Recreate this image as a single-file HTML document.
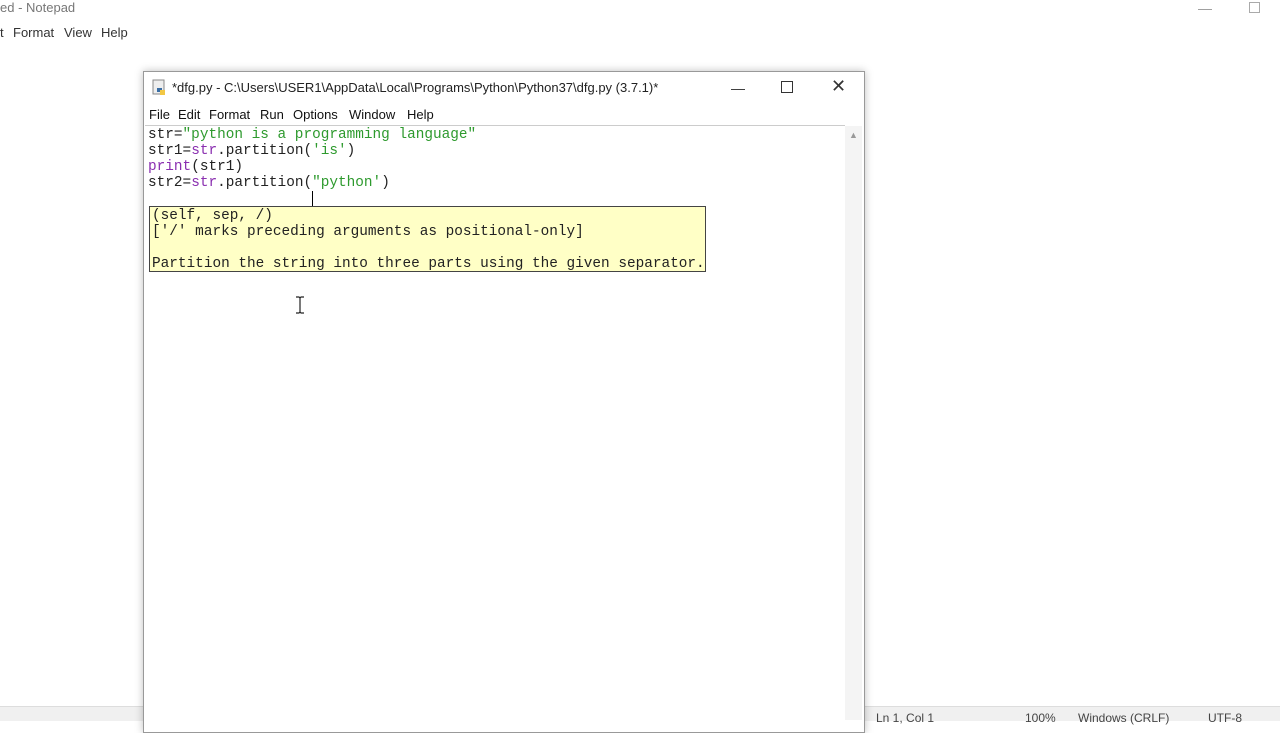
<!DOCTYPE html><html><head><style>
body{margin:0;width:1280px;height:720px;overflow:hidden;background:#fff;font-family:"Liberation Sans",sans-serif;position:relative}
.a{position:absolute}
.mono{font-family:"Liberation Mono",monospace;font-size:14.4px;white-space:pre;line-height:16px;color:#222}
.g{color:#2e9a2e}.p{color:#8a2fb0}
</style></head><body>
<div class="a" style="left:0;top:0;font-size:13px;color:#777">ed - Notepad</div>
<div class="a" style="left:1198px;top:0;color:#999;font-size:14px">—</div>
<div class="a" style="left:1249px;top:2px;width:9px;height:9px;border:1px solid #aaa"></div>
<div class="a" style="left:0;top:25px;font-size:13px;color:#333">t</div>
<div class="a" style="left:13px;top:25px;font-size:13px;color:#333">Format</div>
<div class="a" style="left:64px;top:25px;font-size:13px;color:#333">View</div>
<div class="a" style="left:101px;top:25px;font-size:13px;color:#333">Help</div>
<div class="a" style="left:0;top:706px;width:1280px;height:14px;background:#f0f0f0;border-top:1px solid #ddd"></div>
<div class="a" style="left:876px;top:711px;font-size:12px;color:#444">Ln 1, Col 1</div>
<div class="a" style="left:1025px;top:711px;font-size:12px;color:#444">100%</div>
<div class="a" style="left:1078px;top:711px;font-size:12px;color:#444">Windows (CRLF)</div>
<div class="a" style="left:1208px;top:711px;font-size:12px;color:#444">UTF-8</div>
<div class="a" style="left:143px;top:71px;width:720px;height:660px;background:#fff;border:1px solid #999;box-shadow:0 0 8px rgba(0,0,0,.25)"></div>
<svg class="a" style="left:151px;top:79px" width="18" height="18"><rect x="2" y="1" width="11" height="14" fill="#eee" stroke="#888"/><path d="M6 9h5v4H6z" fill="#3a6ea5"/><path d="M9 11h5v5H9z" fill="#f2c744"/></svg>
<div class="a" style="left:172px;top:80px;font-size:13px;color:#222">*dfg.py - C:\Users\USER1\AppData\Local\Programs\Python\Python37\dfg.py (3.7.1)*</div>
<div class="a" style="left:731px;top:80px;font-size:14px;color:#333">—</div>
<div class="a" style="left:781px;top:81px;width:10px;height:10px;border:1px solid #333"></div>
<div class="a" style="left:831px;top:76px;font-size:18px;color:#333">✕</div>
<div class="a" style="left:149px;top:107px;font-size:13px;color:#111">File</div>
<div class="a" style="left:178px;top:107px;font-size:13px;color:#111">Edit</div>
<div class="a" style="left:209px;top:107px;font-size:13px;color:#111">Format</div>
<div class="a" style="left:260px;top:107px;font-size:13px;color:#111">Run</div>
<div class="a" style="left:293px;top:107px;font-size:13px;color:#111">Options</div>
<div class="a" style="left:349px;top:107px;font-size:13px;color:#111">Window</div>
<div class="a" style="left:407px;top:107px;font-size:13px;color:#111">Help</div>
<div class="a" style="left:145px;top:125px;width:700px;height:1px;background:#ccc"></div>
<div class="a" style="left:845px;top:126px;width:17px;height:594px;background:#f4f4f4"></div>
<div class="a" style="left:849px;top:130px;font-size:9px;color:#999">▲</div>
<div class="a mono" style="left:148px;top:127px">str=<span class="g">"python is a programming language"</span>
str1=<span class="p">str</span>.partition(<span class="g">'is'</span>)
<span class="p">print</span>(str1)
str2=<span class="p">str</span>.partition(<span class="g">"python'</span>)</div>
<div class="a" style="left:312px;top:191px;width:1px;height:16px;background:#000"></div>
<div class="a mono" style="left:149px;top:206px;width:553px;height:63px;background:#ffffc6;border:1px solid #444;padding-left:2px;line-height:16px;padding-top:1px;color:#222">(self, sep, /)
['/' marks preceding arguments as positional-only]

Partition the string into three parts using the given separator.</div>
<svg class="a" style="left:295px;top:296px" width="10" height="18"><path d="M1 1h3l1 1 1-1h3M5 2v14M1 17h3l1-1 1 1h3" stroke="#222" fill="none" stroke-width="1.2"/></svg>
</body></html>
